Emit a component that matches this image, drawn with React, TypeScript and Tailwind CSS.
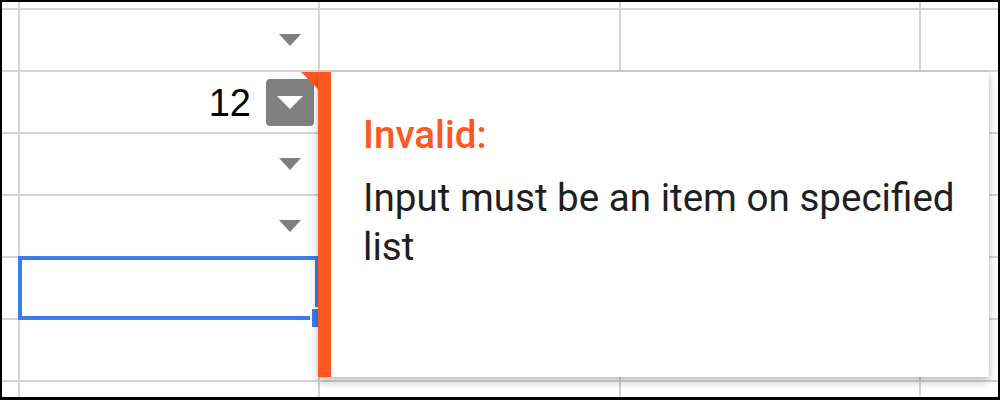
import React from 'react';

const ROWS = 7;
const COLS = 5;

const Caret: React.FC<{ color?: string; w?: number; h?: number }> = ({ color = '#7f7f7f', w = 22, h = 12 }) => (
  <svg width={w} height={h} viewBox={`0 0 ${w} ${h}`} className="block">
    <polygon points={`0,0 ${w},0 ${w / 2},${h}`} fill={color} />
  </svg>
);

const Cell: React.FC<{ row: number; col: number }> = ({ row, col }) => {
  // the data-validation column
  if (col === 1 && (row === 1 || row === 3 || row === 4)) {
    return (
      <div className="bg-white flex items-center justify-end pr-[17px]">
        <Caret />
      </div>
    );
  }

  if (col === 1 && row === 2) {
    return (
      <div className="bg-white relative flex items-center justify-end pr-[4px]">
        <span className="font-['Liberation_Sans',Arial,sans-serif] text-[38px] leading-none text-black mr-[15px] translate-y-[1px]">
          12
        </span>
        <div className="w-[48px] h-[47px] rounded-[4px] bg-[#808080] flex items-center justify-center">
          <Caret color="#ffffff" w={26} h={13} />
        </div>
        {/* red comment corner */}
        <svg width="18" height="18" viewBox="0 0 18 18" className="absolute top-0 -right-[1px]">
          <polygon points="0,0 18,0 18,18" fill="#ff5722" />
        </svg>
      </div>
    );
  }

  if (col === 1 && row === 5) {
    return (
      <div className="bg-white relative">
        <div className="absolute -left-[2px] -top-[2px] -right-[1px] -bottom-[2px] border-4 border-[#3b7ded]" />
        <div className="absolute -right-[3px] bottom-[-11px] w-[11px] h-[22px] bg-[#3b7ded] border-2 border-white" />
      </div>
    );
  }

  return <div className="bg-white" />;
};

const App: React.FC = () => {
  const cells = [];
  for (let r = 0; r < ROWS; r++) {
    for (let c = 0; c < COLS; c++) {
      cells.push(<Cell key={`${r}-${c}`} row={r} col={c} />);
    }
  }

  return (
    <div className="w-[1000px] h-[400px] border-2 border-b-[3px] border-black bg-white relative overflow-hidden">
      <div className="grid grid-cols-[16px_298px_299px_298px_1fr] grid-rows-[6px_60px_60px_60px_60px_60px_60px_20px] gap-[2px] bg-[#d4d4d4] h-full">
        {cells}
        {Array.from({ length: COLS }).map((_, i) => (
          <div key={`last-${i}`} className="bg-white" />
        ))}
      </div>

      {/* validation popup */}
      <div className="absolute left-[316px] top-[70px] w-[671px] h-[305px] bg-white border-l-[13px] border-[#ff5722] shadow-[0_5px_9px_rgba(0,0,0,0.22),0_0_3px_rgba(0,0,0,0.12)] pl-[32px] pr-8 pt-[39px] font-['Roboto',sans-serif]">
        <div className="text-[38.6px] leading-[48px] font-medium text-[#ff5722]">Invalid:</div>
        <div className="mt-[14px] text-[38.6px] leading-[49px] text-[#1f1f1f]">
          Input must be an item on specified list
        </div>
      </div>
    </div>
  );
};

export default App;
